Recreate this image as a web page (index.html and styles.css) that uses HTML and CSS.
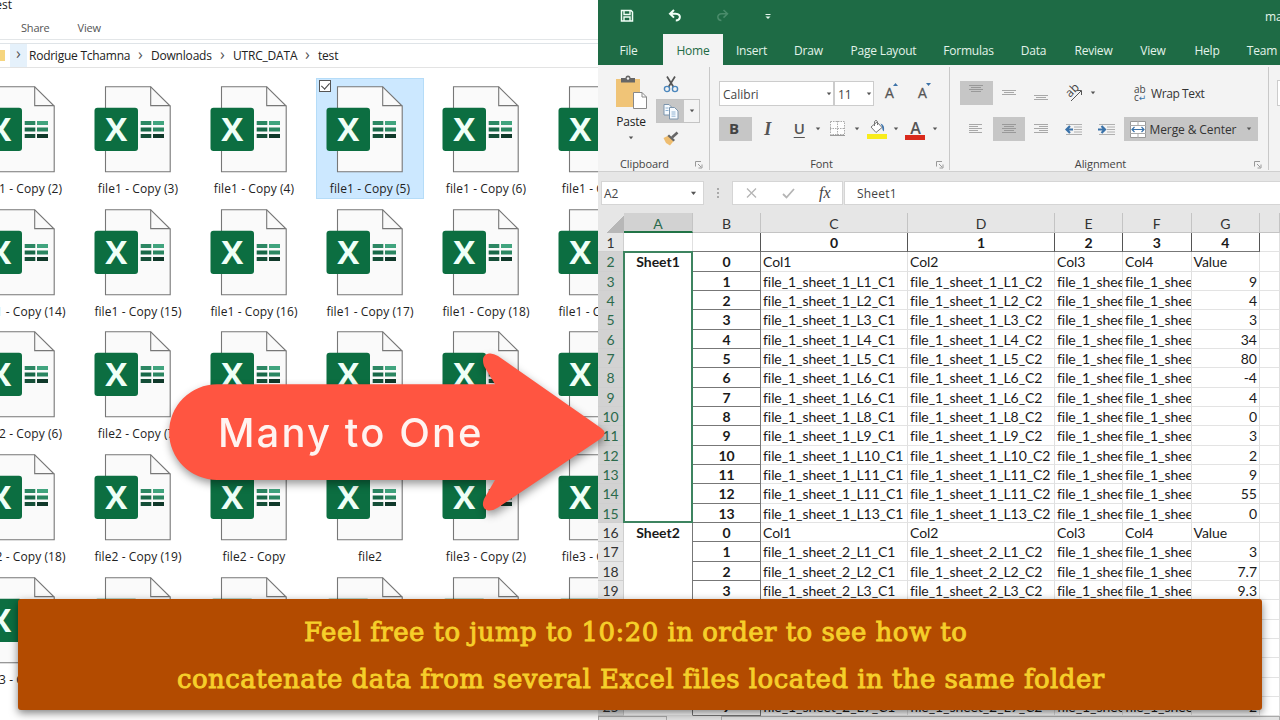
FILE: index.html
```html
<!DOCTYPE html>
<html lang="en">
<head>
    <meta charset="UTF-8">
    <meta name="viewport" content="width=device-width, initial-scale=1.0">
    <title>Many to One</title>
    <link rel="stylesheet" href="styles.css">
</head>
<body>
    <svg class="defs" width="0" height="0">
        <symbol id="xlsFile" viewBox="0 0 108 100">
            <path d="M21.5 8.8H66.7L86.2 28v65.8H21.5z" fill="#fafafa" stroke="#777" stroke-width="1.1"/>
            <path d="M66.7 8.8V27.6H86.2" fill="none" stroke="#777" stroke-width="1.1"/>
            <rect x="10.5" y="29.7" width="43.5" height="43.3" rx="3" fill="#0c6e41"/>
            <text x="32.2" y="63.4" text-anchor="middle" font-family="Open Sans, sans-serif" font-weight="700" font-size="33" fill="#effff7">X</text>
            <path d="M56.7 43h10.6v4H56.7z" fill="#2c8763"/><path d="M69 43h11v4H69z" fill="#41a47e"/>
            <path d="M56.7 49.5h10.6v4H56.7z" fill="#186848"/><path d="M69 49.5h11v4H69z" fill="#2b8661"/>
            <path d="M56.7 56h10.6v4H56.7z" fill="#154f38"/><path d="M69 56h11v4H69z" fill="#10392a"/>
        </symbol>
        <symbol id="caret" viewBox="0 0 6 4"><path d="M.8.5h4.4L3 3.2z" fill="#555"/></symbol>
        <symbol id="launcher" viewBox="0 0 8 8"><path d="M.5 5.500V.5H6M3 3l3 3M7 3.500V7H3.500" fill="none" stroke="#999" stroke-width="1"/></symbol>
    </svg>

    <div class="screen">
        <div class="explorer">
            <div class="win-title">test</div>
            <div class="win-tabs"><span>Share</span><span>View</span></div>
            <div class="address">
                <span class="folder"></span>
                <span class="sep first">›</span>
                <span class="crumb c1">Rodrigue Tchamna</span><span class="sep">›</span>
                <span class="crumb c2">Downloads</span><span class="sep">›</span>
                <span class="crumb c3">UTRC_DATA</span><span class="sep">›</span>
                <span class="crumb">test</span>
            </div>
            <div class="files" id="files"></div>
        </div>

        <div class="excel">
            <div class="quickbar">
                <svg width="180" height="32" viewBox="0 0 180 32" fill="none">
                    <path d="M23.500 10.500h9.500l1.500 1.500v9h-11z" stroke="#f1fff7" stroke-width="1.500"/>
                    <path d="M26 10.500v4h6v-4M26 21v-4h6v4" stroke="#f1fff7" stroke-width="1.400"/>
                    <path d="M76 10l-4 3.800 4 3.800M72.500 13.800h5.200c3.200 0 4.600 2 4.100 4-.4 1.600-1.800 2.700-4 2.700" stroke="#f1fff7" stroke-width="2"/>
                    <path d="M125.500 10l4 3.800-4 3.800M129 13.800h-5c-3.200 0-4.600 2-4.100 4 .4 1.600 1.800 2.700 3.500 2.700" stroke="#4a8c6b" stroke-width="1.500"/>
                    <path d="M167.500 14.500h5" stroke="#e5f5ec"/><path d="M167.500 16.500h5L170 19z" fill="#e5f5ec"/>
                </svg>
                <span class="doc-name">master</span>
            </div>
            <div class="tabs">
                <span class="tab t-file">File</span><span class="tab t-home">Home</span><span class="tab t-insert">Insert</span><span class="tab t-draw">Draw</span><span class="tab t-layout">Page Layout</span><span class="tab t-formulas">Formulas</span><span class="tab t-data">Data</span><span class="tab t-review">Review</span><span class="tab t-view">View</span><span class="tab t-help">Help</span><span class="tab t-team">Team</span>
            </div>

            <div class="ribbon">
                <div class="group clipboard">
                    <div class="group-body">
                        <div class="paste">
                            <svg width="36" height="36" viewBox="0 0 36 36">
                                <path d="M3 4h24v28H3z" fill="#f0c477"/>
                                <path d="M8 3h4.500a2.500 2.500 0 0 1 5 0H22v4.500H8z" fill="#666"/><circle cx="15" cy="3.500" r="1.200" fill="#f3f3f3"/>
                                <path d="M20.500 17.500h8.500l4.500 4.500v11.500h-13z" fill="#fff" stroke="#888"/><path d="M29 17.500V22h4.500" fill="none" stroke="#888"/>
                            </svg>
                            <span>Paste</span>
                            <svg class="caret"><use href="#caret"/></svg>
                        </div>
                        <div class="clip-tools">
                            <svg width="16" height="17" viewBox="0 0 16 17" fill="none">
                                <path d="M4 .5l6.500 10.500M12 .5L5.500 11" stroke="#555" stroke-width="1.700"/>
                                <circle cx="4" cy="13" r="2.600" stroke="#4b87bd" stroke-width="1.400"/><circle cx="12" cy="13" r="2.600" stroke="#4b87bd" stroke-width="1.400"/>
                            </svg>
                            <div class="copy-btn">
                                <span class="copy-main"><svg width="16" height="17" viewBox="0 0 16 17" fill="#f7fbff" stroke="#7c95ad">
                                    <path d="M1 1.500h5l2.500 2.500v8H1z"/><path d="M6.500 4.500h5L15 8v8H6.500z"/><path d="M2.500 5h3M2.500 7.500h3M8.500 9h4M8.500 11h4M8.500 13.200h4" stroke="#8fb2d2"/>
                                </svg></span>
                                <span class="copy-drop"><svg class="caret"><use href="#caret"/></svg></span>
                            </div>
                            <svg width="16" height="15" viewBox="0 0 16 15">
                                <path d="M.5 7l5-2.500 5.500 5L7 14.500 3 12z" fill="#eebd70"/><path d="M6 3.500l6 5.500-1.500 1.500-6-5.500z" fill="#666"/><path d="M9 6.500L14.500 1.500" stroke="#666" stroke-width="2.600"/>
                            </svg>
                        </div>
                    </div>
                    <div class="caption">Clipboard<svg class="launcher"><use href="#launcher"/></svg></div>
                </div>

                <div class="group font">
                    <div class="group-body rows">
                        <div class="row">
                            <span class="combo name">Calibri<svg class="caret"><use href="#caret"/></svg></span>
                            <span class="combo size">11<svg class="caret"><use href="#caret"/></svg></span>
                            <span class="grow">A<svg width="5" height="3" viewBox="0 0 5 3"><path d="M0 3h5L2.500 0z" fill="#3c72a8"/></svg></span>
                            <span class="grow">A<svg width="5" height="3" viewBox="0 0 5 3"><path d="M0 0h5L2.500 3z" fill="#3c72a8"/></svg></span>
                        </div>
                        <div class="row">
                            <span class="btn on bold">B</span>
                            <span class="btn italic">I</span>
                            <span class="btn under">U</span>
                            <svg class="caret"><use href="#caret"/></svg>
                            <span class="btn"><svg width="16" height="16" viewBox="0 0 16 16"><path d="M.5.5h14v13H.5z" fill="#fdfdfd" stroke="#aaa" stroke-dasharray="1.500 1"/><path d="M7.500 0v14M0 7.500h15" stroke="#aaa" stroke-dasharray="1.500 1"/><path d="M0 14.500h15" stroke="#999"/></svg></span>
                            <svg class="caret"><use href="#caret"/></svg>
                            <span class="btn"><svg width="22" height="20" viewBox="0 0 22 20"><path d="M5 8l6-5 5 5.500-6 5z" fill="#fff" stroke="#777"/><path d="M8.500 7V2.500q1.500-2.500 3 0V6" fill="none" stroke="#777"/><path d="M14.500 4.500q4.500 1 3.500 8-2-1.500-2-5z" fill="#3f75ad"/><path d="M1 15h20v5H1z" fill="#f8ec1b"/></svg></span>
                            <svg class="caret"><use href="#caret"/></svg>
                            <span class="btn font-color">A</span>
                            <svg class="caret"><use href="#caret"/></svg>
                        </div>
                    </div>
                    <div class="caption">Font<svg class="launcher"><use href="#launcher"/></svg></div>
                </div>

                <div class="group alignment">
                    <div class="group-body rows">
                        <div class="row">
                            <span class="btn on"><svg width="16" height="16" viewBox="0 0 16 16"><path d="M1 .5h14M3 2.500h10M1 4.500h14M3 6.500h10" stroke="#999"/></svg></span>
                            <span class="btn"><svg width="16" height="16" viewBox="0 0 16 16"><path d="M1 5.500h14M3 7.500h10M1 9.500h14" stroke="#a8a8a8"/></svg></span>
                            <span class="btn"><svg width="16" height="16" viewBox="0 0 16 16"><path d="M1 10.500h14M3 12.500h10M1 14.500h14" stroke="#a8a8a8"/></svg></span>
                            <span class="btn wide"><svg width="20" height="18" viewBox="0 0 20 18"><text transform="translate(6 14) rotate(-45)" font-family="Open Sans" font-size="12" fill="#444">ab</text><path d="M7 17L17 7M13 6.500h4.500V11" fill="none" stroke="#555"/></svg></span>
                            <svg class="caret"><use href="#caret"/></svg>
                            <span class="wrap-icon"><i>ab</i><i>c<b>↵</b></i></span>
                            <span class="btn-label">Wrap Text</span>
                        </div>
                        <div class="row">
                            <span class="btn"><svg width="16" height="12" viewBox="0 0 16 12"><path d="M1 1.500h13M1 3.500h9M1 5.500h13M1 7.500h9M1 9.500h13" stroke="#a8a8a8"/></svg></span>
                            <span class="btn on"><svg width="16" height="12" viewBox="0 0 16 12"><path d="M1 1.500h14M3 3.500h10M1 5.500h14M3 7.500h10M1 9.500h14" stroke="#999"/></svg></span>
                            <span class="btn"><svg width="16" height="12" viewBox="0 0 16 12"><path d="M1 1.500h14M6 3.500h9M1 5.500h14M6 7.500h9M1 9.500h14" stroke="#a8a8a8"/></svg></span>
                            <span class="btn"><svg width="17" height="13" viewBox="0 0 17 13"><path d="M1 1.500h16M9 4h8M9 6.500h8M9 9h8M1 11.500h16" stroke="#b0b0b0"/><path d="M8 6.500H2M5 3L1.500 6.500 5 10" fill="none" stroke="#3a72a9" stroke-width="2.200"/></svg></span>
                            <span class="btn"><svg width="17" height="13" viewBox="0 0 17 13"><path d="M1 1.500h16M9 4h8M9 6.500h8M9 9h8M1 11.500h16" stroke="#b0b0b0"/><path d="M0 6.500h6M3.500 3L7 6.500 3.500 10" fill="none" stroke="#3a72a9" stroke-width="2.200"/></svg></span>
                            <span class="merge">
                                <svg width="16" height="17" viewBox="0 0 16 17"><path d="M.5.500h15v16H.500z" fill="#fff" stroke="#999"/><path d="M8 0v4M8 13v4M0 4.500h16M0 12.500h16" stroke="#aaa"/><path d="M2 8.500h12M4.500 6L2 8.500 4.500 11M11.500 6L14 8.500 11.500 11" fill="none" stroke="#3a72a9" stroke-width="1.200"/></svg>
                                <span>Merge &amp; Center</span>
                                <svg class="caret"><use href="#caret"/></svg>
                            </span>
                        </div>
                    </div>
                    <div class="caption">Alignment<svg class="launcher"><use href="#launcher"/></svg></div>
                </div>
                <div class="group number"><span></span></div>
            </div>

            <div class="formula-bar">
                <span class="name-box">A2<svg class="caret big"><use href="#caret"/></svg></span>
                <span class="dots"><i></i><i></i><i></i></span>
                <span class="fx-box">
                    <svg width="68" height="16" viewBox="0 0 68 16" fill="none" stroke="#b5b5b5">
                        <path d="M1 3.500l9 9M10 3.500l-9 9" stroke-width="1.300"/><path d="M37 9l3.500 3.500L48 4" stroke-width="1.800"/>
                    </svg>
                    <em>fx</em>
                </span>
                <span class="value-box">Sheet1</span>
            </div>

            <div class="sheet" id="sheet"></div>
            <div class="sheet-tabs"><span></span><span></span></div>
        </div>

        <div class="arrow">
            <svg width="460" height="180" viewBox="160 345 460 180">
                <path d="M217 384.300H495L484 366Q480.500 355 489 353.600Q493 353 498 356L601 428Q608 433 601 438.500L498 507.500Q493 511 488 510.500Q480.500 508.500 484 499L495 480H217A47.850 47.850 0 0 1 217 384.300Z" fill="#ff5541"/>
            </svg>
            <span>Many to One</span>
        </div>

        <div class="banner">
            <p class="line1">Feel free to jump to 10:20 in order to see how to</p>
            <p class="line2">concatenate data from several Excel files located in the same folder</p>
        </div>
    </div>

    <script src="script.js"></script>
</body>
</html>
```

FILE: styles.css
```css
* {
    box-sizing: border-box;
}

body {
    margin: 0;
    background: #fff;
    font-family: "Open Sans", "Noto Sans", sans-serif;
    color: #222;
}

.defs {
    position: absolute;
}

svg {
    display: block;
    flex: none;
}

.screen {
    position: relative;
    display: flex;
    width: 1280px;
    height: 720px;
    overflow: hidden;
}

/* file explorer */
.explorer {
    width: 598px;
    height: 720px;
    overflow: hidden;
    flex: none;
    background: #fff;
}

.win-title {
    height: 17px;
    margin-left: -9px;
    font-size: 12px;
    line-height: 10px;
}

.win-tabs {
    display: flex;
    gap: 28px;
    height: 23px;
    padding-left: 21px;
    border-bottom: 1px solid #e3e6e8;
    font-size: 11px;
    line-height: 22px;
    letter-spacing: -0.2px;
    color: #555;
}

.address {
    display: flex;
    align-items: center;
    height: 25px;
    margin-top: 3px;
    border-top: 1px solid #dfe4e8;
    border-bottom: 1px solid #e3e3e3;
    font-size: 12px;
    white-space: nowrap;
}

.folder {
    width: 5px;
    height: 11px;
    margin-right: 5px;
    background: #f6d57e;
}

.sep {
    width: 21px;
    text-align: center;
    font-size: 16px;
    line-height: 18px;
    padding-bottom: 3px;
    color: #555;
}

.sep.first {
    width: 17px;
    height: 23px;
    margin-right: 2px;
    background: #e5f1fb;
}

.crumb {
    letter-spacing: -0.2px;
}

.c1 {
    width: 101px;
    letter-spacing: -0.25px;
}

.c2 {
    width: 61px;
}

.c3 {
    width: 64px;
}

.files {
    display: grid;
    grid-template-columns: repeat(6, 108px);
    column-gap: 8px;
    row-gap: 1.7px;
    margin: 10px 0 0 -32.500px;
}

.file {
    position: relative;
    height: 121px;
    font-size: 12px;
    text-align: center;
    letter-spacing: 0.08px;
    white-space: nowrap;
}

.file svg {
    width: 108px;
    height: 100px;
}

.file .label {
    display: block;
    padding: 1px 0 0 1px;
    line-height: 20px;
}

.file.selected {
    background: #cce8ff;
    outline: 1px solid #b5dcf8;
    outline-offset: -1px;
}

.check {
    position: absolute;
    left: 3.500px;
    top: 2px;
    width: 12px;
    height: 12px;
    border: 1px solid #555;
    background: #fff;
}

.check::after {
    content: "";
    position: absolute;
    left: 3px;
    top: 0;
    width: 4px;
    height: 7px;
    border: solid #444;
    border-width: 0 1px 1px 0;
    transform: rotate(42deg);
}

/* excel window */
.excel {
    width: 682px;
    height: 720px;
    overflow: hidden;
    flex: none;
    background: #e6e6e6;
}

.quickbar {
    display: flex;
    height: 34px;
    background: #1e6b45;
}

.doc-name {
    margin-left: 487px;
    font-size: 12px;
    line-height: 34px;
    color: #e5f5ec;
}

.tabs {
    display: flex;
    height: 31px;
    background: #1e6b45;
    font-size: 12px;
    line-height: 33px;
    letter-spacing: -0.2px;
    color: #e3f3ea;
}

.tab {
    flex: none;
    text-align: center;
}

.t-file { width: 61px; margin-right: 4px; }
.t-home { width: 60px; background: #f3f3f3; color: #1e6b45; }
.t-insert { width: 57px; }
.t-draw { width: 57px; }
.t-layout { width: 93px; }
.t-formulas { width: 77px; }
.t-data { width: 53px; }
.t-review { width: 67px; }
.t-view { width: 52px; }
.t-help { width: 56px; }
.t-team { width: 54px; }

.ribbon {
    display: flex;
    height: 107px;
    padding-top: 2px;
    background: #f3f3f3;
    border-bottom: 1px solid #cfcfcf;
}

.group {
    display: flex;
    flex-direction: column;
    flex: none;
    height: 103px;
    border-right: 1px solid #c8c8c8;
}

.clipboard { width: 112px; }
.font { width: 240px; }
.alignment { width: 319px; }

.number {
    border: 0;
    padding: 13px 0 0 8px;
}

.number span {
    width: 10px;
    height: 26px;
    border: 1px solid #ccc;
    background: #fff;
}

.group-body {
    display: flex;
    height: 87px;
}

.caption {
    position: relative;
    height: 16px;
    font-size: 11px;
    line-height: 20px;
    text-align: center;
    letter-spacing: -0.1px;
    color: #444;
}

.clipboard .caption {
    padding-right: 18px;
}

.font .caption {
    padding-right: 16px;
}

.alignment .caption {
    padding-right: 17px;
}

.launcher {
    position: absolute;
    right: 6px;
    top: 7px;
    width: 8px;
    height: 8px;
}

.font .launcher { right: 5px; }

.caret {
    width: 6px;
    height: 4px;
}

.paste {
    display: flex;
    flex-direction: column;
    align-items: center;
    width: 58px;
    padding: 8px 0 0 8px;
    font-size: 12px;
    letter-spacing: -0.2px;
    line-height: 21px;
}

.paste .caret {
    margin-top: 4px;
}

.clip-tools {
    display: flex;
    flex-direction: column;
    padding: 9px 0 0 0;
}

.clip-tools > svg {
    margin-left: 7px;
}

.copy-btn {
    display: flex;
    margin: 6px 0 8px 0;
    width: 44px;
    height: 24px;
    border: 1px solid #c4c4c4;
}

.copy-main {
    display: flex;
    align-items: center;
    justify-content: center;
    width: 27px;
    background: #c6c6c6;
}

.copy-drop {
    display: flex;
    align-items: center;
    padding-left: 5px;
}

.rows {
    flex-direction: column;
    gap: 12px;
    padding: 14px 0 0 9px;
}

.row {
    display: flex;
    align-items: center;
    height: 24px;
}

.alignment .rows {
    padding-left: 10px;
}

.combo {
    display: flex;
    align-items: center;
    justify-content: space-between;
    height: 25px;
    padding: 2px 1px 0 3px;
    border: 1px solid #ccc;
    background: #fff;
    font-size: 12px;
    color: #444;
}

.combo.name { width: 115px; }
.combo.size { width: 40px; }

.grow {
    display: flex;
    width: 33px;
    padding-left: 11px;
    font-size: 14px;
    line-height: 20px;
    color: #555;
    -webkit-text-stroke: 0.3px #555;
}

.grow svg {
    margin-left: -1px;
}

.btn {
    display: flex;
    align-items: center;
    justify-content: center;
    width: 32.500px;
    height: 24px;
    flex: none;
}

.font .btn {
    width: 33px;
}

.font .italic, .font .under {
    width: 31.500px;
}

.font .caret {
    flex: none;
}

.btn.on {
    background: #c6c6c6;
}

.bold {
    font-size: 15px;
    font-weight: 700;
    padding: 0 3px 2px 0;
    color: #444;
}

.italic {
    font-family: "Liberation Serif", serif;
    font-size: 18px;
    font-style: italic;
    font-weight: 700;
    color: #555;
}

.under {
    font-size: 15px;
    font-weight: 600;
    padding-bottom: 3px;
    text-decoration: underline;
    text-underline-offset: 3px;
    color: #555;
}

.font-color {
    position: relative;
    padding-bottom: 3px;
    font-size: 16px;
    font-weight: 600;
    color: #555;
}

.font-color::after {
    content: "";
    position: absolute;
    left: 6px;
    bottom: 1px;
    width: 20px;
    height: 5px;
    background: #d92a1c;
}

.wrap-icon {
    display: flex;
    flex-direction: column;
    width: 17px;
    margin-left: 38px;
    font-size: 10px;
    line-height: 8px;
    color: #444;
}

.wrap-icon i {
    font-style: normal;
}

.wrap-icon b {
    font-family: "DejaVu Sans", sans-serif;
    font-weight: 400;
    font-size: 9px;
    color: #3a72a9;
}

.btn-label {
    font-size: 12px;
    letter-spacing: -0.4px;
    color: #333;
}

.merge {
    display: flex;
    align-items: center;
    width: 134px;
    height: 24px;
    margin-left: 1px;
    padding-left: 6px;
    background: #c6c6c6;
    font-size: 12px;
    letter-spacing: -0.1px;
    color: #333;
}

.merge span {
    width: 100px;
    padding-left: 4px;
    white-space: nowrap;
}

.formula-bar {
    display: flex;
    height: 41px;
    padding: 10px 0 9px 4px;
    font-size: 12px;
    color: #444;
}

.formula-bar > span {
    display: flex;
    align-items: center;
    height: 22px;
    background: #fff;
    outline: 1px solid #d5d5d5;
}

.name-box {
    width: 101px;
    justify-content: space-between;
    padding: 0 6px 0 2px;
}

.caret.big {
    width: 7px;
    height: 5px;
}

.formula-bar .dots {
    flex-direction: column;
    justify-content: center;
    gap: 2px;
    width: 30px;
    background: none;
    outline: 0;
}

.dots i {
    width: 2px;
    height: 2px;
    background: #aaa;
}

.fx-box {
    width: 109px;
    padding-left: 13px;
}

.fx-box em {
    margin-left: 5px;
    font-family: "Liberation Serif", serif;
    font-size: 16px;
    color: #444;
}

.value-box {
    flex: 1;
    margin-left: 3px;
    padding-left: 12px;
    letter-spacing: 0.2px;
}

/* worksheet grid */
.sheet {
    display: grid;
    grid-template-columns: 26px 69px 68px 147px 147px 68px 68.500px 68.500px 20px;
    grid-template-rows: 20px repeat(25, 19.330px);
    background: #fff;
    font-family: Lato, "Open Sans", sans-serif;
    font-size: 14px;
    line-height: 20px;
    color: #1a1a1a;
}

.sheet div {
    overflow: hidden;
    white-space: nowrap;
    border-right: 1px solid #e0e0e0;
    border-bottom: 1px solid #e3e3e3;
}

.sheet .head {
    background: #e6e6e6;
    border-color: #c4c4c4;
    line-height: 22px;
    text-align: center;
    color: #333;
}

.sheet .corner {
    background: linear-gradient(135deg, #e6e6e6 62%, #b7b7b7 62%);
    border: 0;
}

.sheet .rownum {
    background: #e6e6e6;
    border-color: #cfcfcf;
    text-align: center;
    color: #333;
}

.sheet .picked {
    background: #d2d2d2;
    color: #2b6a4c;
}

.sheet .head.picked {
    border-bottom: 2px solid #217346;
}

.sheet .idx {
    border-color: #777;
    font-weight: 700;
    text-align: center;
}

.sheet .top {
    border-bottom-color: #777;
}

.sheet .top.idx {
    border-right-color: #555;
}

.sheet .text {
    padding-left: 2px;
    letter-spacing: -0.07px;
}

.sheet .num {
    padding-right: 2px;
    text-align: right;
}

.sheet .merged {
    font-weight: 700;
    text-align: center;
    border-right-color: #777;
}

.sheet .active {
    border: 0;
    margin: -1px 0 0 -1px;
    outline: 2px solid #3d8460;
    outline-offset: -2px;
    z-index: 1;
    padding-top: 1px;
}

.sheet-tabs {
    display: flex;
    gap: 54px;
    height: 6px;
    background: #e3e3e3;
}

.sheet-tabs span {
    width: 69px;
    border: 1px solid #aaa;
    border-bottom: 0;
}

.sheet-tabs span:last-child {
    flex: 1;
}

/* overlays */
.arrow {
    position: absolute;
    left: 160px;
    top: 345px;
    filter: drop-shadow(1px 4px 4px rgba(0, 0, 0, 0.4));
}

.arrow span {
    position: absolute;
    left: 58px;
    top: 61px;
    font-family: Inter, sans-serif;
    font-size: 40px;
    line-height: 54px;
    font-weight: 500;
    letter-spacing: 2.100px;
    white-space: nowrap;
    color: #fff3f0;
}

.banner {
    position: absolute;
    left: 18px;
    top: 599px;
    width: 1244px;
    height: 111px;
    padding-top: 10px;
    border-radius: 3px;
    background: #b34b00;
    box-shadow: 0 3px 9px rgba(0, 0, 0, 0.5);
    font-family: "DejaVu Serif", serif;
    font-size: 26px;
    line-height: 47px;
    letter-spacing: 0.45px;
    color: #f6cf2a;
    -webkit-text-stroke: 0.9px #f6cf2a;
    white-space: nowrap;
}

.banner p {
    margin: 0;
}

.line1 {
    padding-left: 286px;
}

.line2 {
    padding-left: 159px;
}
```

FILE: script.js
```js
// explorer icons, one array per row
const fileRows = [
    ['file1 - Copy (2)', 'file1 - Copy (3)', 'file1 - Copy (4)', 'file1 - Copy (5)', 'file1 - Copy (6)', 'file1 - Copy (7)'],
    ['file1 - Copy (14)', 'file1 - Copy (15)', 'file1 - Copy (16)', 'file1 - Copy (17)', 'file1 - Copy (18)', 'file1 - Copy (19)'],
    ['file2 - Copy (6)', 'file2 - Copy (7)', '', '', '', ''],
    ['file2 - Copy (18)', 'file2 - Copy (19)', 'file2 - Copy', 'file2', 'file3 - Copy (2)', 'file3 - Copy (3)'],
    ['file3 - Copy (9)', '', '', '', '', '']
];

const files = document.getElementById('files');
fileRows.flat().forEach(function (name) {
    const selected = name === 'file1 - Copy (5)';
    files.insertAdjacentHTML('beforeend',
        '<div class="file' + (selected ? ' selected' : '') + '">' +
        (selected ? '<span class="check"></span>' : '') +
        '<svg><use href="#xlsFile"/></svg><span class="label">' + name + '</span></div>');
});

// worksheet
const sheet = document.getElementById('sheet');

function cell(row, col, cls, text, span) {
    const el = document.createElement('div');
    el.className = cls;
    el.textContent = text;
    el.style.gridArea = row + ' / ' + col + ' / span ' + (span || 1);
    sheet.appendChild(el);
}

cell(1, 1, 'corner', '');
['A', 'B', 'C', 'D', 'E', 'F', 'G', ''].forEach(function (l, i) {
    cell(1, i + 2, 'head' + (l === 'A' ? ' picked' : ''), l);
});
['', '', '0', '1', '2', '3', '4', ''].forEach(function (v, i) {
    cell(2, i + 2, i > 0 && i < 7 ? 'top idx' : '', v);
});
for (let r = 1; r <= 25; r++) {
    cell(r + 1, 1, 'rownum' + (r > 1 && r < 16 ? ' picked' : ''), r);
}
cell(3, 2, 'merged active', 'Sheet1', 14);
cell(17, 2, 'merged', 'Sheet2', 10);

const lines = {
    1: [1, 2, 3, 4, 5, 6, 6, 8, 9, 10, 11, 11, 13],
    2: [1, 2, 3, 4, 5, 6, 7, 8, 9]
};
const values = {
    1: ['9', '4', '3', '34', '80', '-4', '4', '0', '3', '2', '9', '55', '0'],
    2: ['3', '7.7', '9.3', '', '', '', '', '', '2']
};

[1, 2].forEach(function (s) {
    const start = s === 1 ? 3 : 17;
    cell(start, 3, 'idx', '0');
    ['Col1', 'Col2', 'Col3', 'Col4', 'Value'].forEach(function (t, i) {
        cell(start, i + 4, 'text', t);
    });
    cell(start, 9, '', '');
    lines[s].forEach(function (n, i) {
        const row = start + 1 + i;
        cell(row, 3, 'idx', i + 1);
        for (let c = 1; c <= 4; c++) {
            cell(row, c + 3, 'text', 'file_1_sheet_' + s + '_L' + n + '_C' + c);
        }
        cell(row, 8, 'num', values[s][i]);
        cell(row, 9, '', '');
    });
});
```
